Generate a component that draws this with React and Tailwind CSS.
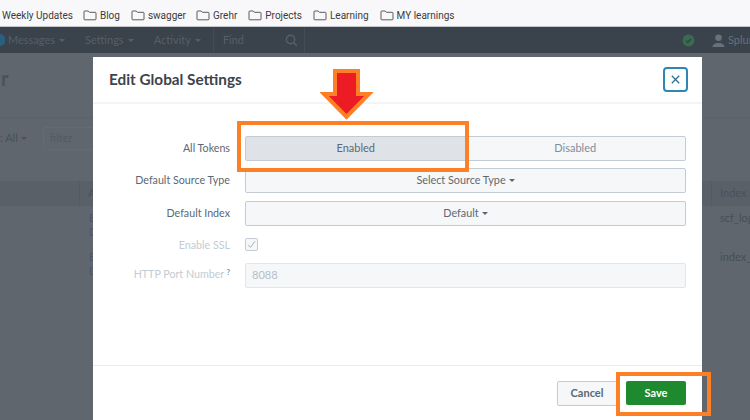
const FOLDER = "M2 3h3.2l1.2 1.3H12.2a.8.8 0 0 1 .8.8v5.9a.8.8 0 0 1-.8.8H1.8a.8.8 0 0 1-.8-.8V3.8a.8.8 0 0 1 .8-.8z";

function Bookmark({ label, className }) {
  return (
    <div className={`flex items-center gap-[3px] ${className || ""}`}>
      <svg width="14" height="14" viewBox="0 0 14 14" fill="none" stroke="#4a4a4a" strokeWidth="0.9">
        <path d={FOLDER} />
      </svg>
      <span>{label}</span>
    </div>
  );
}

function Caret({ className }) {
  return <span className={`inline-block w-0 h-0 border-x-[3px] border-x-transparent border-t-[3px] ${className}`} />;
}

function Row({ label, muted, flat, children, className }) {
  return (
    <div className={`flex items-center ${className}`}>
      <div className={`w-[137px] text-right text-[10.7px] leading-[13px] ${flat ? "" : "pb-[3px]"} ${muted ? "text-[#c3cbd4]" : "text-[#5c6773]"}`}>{label}</div>
      <div className="ml-[15px] flex-1">{children}</div>
    </div>
  );
}

function SelectBox({ children }) {
  return (
    <div className="h-[25px] flex items-center justify-center gap-[3px] rounded-[2px] border border-[#c3cbd4] bg-[#f5f7f9] text-[10.8px] text-[#5f6770]">
      {children}
      <Caret className="border-t-[#5c6773]" />
    </div>
  );
}

export default function App() {
  return (
    <div className="relative w-[750px] h-[420px] overflow-hidden flex flex-col bg-[#5f666e] font-['Lato','Liberation_Sans',sans-serif]">
      {/* browser bookmarks */}
      <div className="h-[27px] shrink-0 flex items-center bg-[#f8f8fa] border-b border-[#c4c5c7] pl-[2px] pt-[4px] text-[10px] text-[#3b3b3b] font-['Roboto','Liberation_Sans',sans-serif]">
        <span>Weekly Updates</span>
        <Bookmark label="Blog" className="ml-[10px]" />
        <Bookmark label="swagger" className="ml-[11px]" />
        <Bookmark label="Grehr" className="ml-[10px]" />
        <Bookmark label="Projects" className="ml-[11px]" />
        <Bookmark label="Learning" className="ml-[11px]" />
        <Bookmark label="MY learnings" className="ml-[11px]" />
      </div>

      {/* dimmed app nav */}
      <div className="h-[26px] shrink-0 flex items-center bg-[#3a424b] text-[11px] text-[#565f69]">
        <div className="w-[5px] h-[12px] rounded-r-full bg-[#2a5f80]" />
        <div className="ml-[3px] flex items-center gap-[4px]">Messages <Caret className="border-t-[#565f69]" /></div>
        <div className="ml-[20px] flex items-center gap-[4px]">Settings <Caret className="border-t-[#565f69]" /></div>
        <div className="ml-[20px] flex items-center gap-[4px]">Activity <Caret className="border-t-[#565f69]" /></div>
        <div className="ml-[12px] h-full w-[92px] flex items-center justify-between border-x border-[#444c55] pl-[9px] pr-[6px]">
          <span>Find</span>
          <svg width="13" height="13" viewBox="0 0 13 13" fill="none" stroke="#565f69" strokeWidth="1.4">
            <circle cx="5.5" cy="5.5" r="4.2" />
            <path d="M8.6 8.6 12 12" />
          </svg>
        </div>
        <div className="ml-auto flex items-center">
          <svg width="13" height="13" viewBox="0 0 13 13">
            <circle cx="6.5" cy="6.5" r="6" fill="#3b6a50" />
            <path d="M4 6.7 5.8 8.4 9 5" fill="none" stroke="#2c4436" strokeWidth="1.1" />
          </svg>
          <svg className="ml-[17px]" width="13" height="13" viewBox="0 0 13 13" fill="#68717b">
            <circle cx="6.5" cy="3.8" r="3.3" />
            <path d="M0.5 13c0-2.6 2.8-3.4 4.4-4h3.2c1.6.6 4.4 1.4 4.4 4z" />
          </svg>
          <span className="ml-[3px] w-[22px] overflow-hidden whitespace-nowrap text-[#68717b]">Splunk</span>
        </div>
      </div>

      {/* dimmed page beneath the dialog */}
      <div className="relative flex-1 text-[#49515a]">
        <div className="h-[65px] border-b border-[#5a6169] text-[20px] font-bold leading-none pt-[15px] pl-[1px]">
          <span className="text-[#4a525b]">r</span>
        </div>
        <div className="mt-[8px] h-[24px] flex items-center text-[11px]">
          <span className="flex items-center gap-[3px]">: All <Caret className="border-t-[#49515a]" /></span>
          <div className="ml-[16px] h-[23px] w-[60px] flex items-center rounded-[2px] border border-[#646b73] pl-[6px] text-[#525a63]">filter</div>
        </div>
        <div className="mt-[31px] h-[25px] flex items-center bg-[#596068] text-[11px]">
          <div className="w-[80px] h-full border-r border-[#545b63]" />
          <div className="flex-1 pl-[8px]">A</div>
          <div className="w-[39px] h-full border-l border-[#545b63] pl-[8px] flex items-center">Index</div>
        </div>
        <div className="flex text-[11px] leading-[14px] pt-[5px]">
          <div className="ml-[89px] text-[#47586a]">
            <div>E</div><div>D</div>
            <div className="mt-[11px]">E</div><div>D</div>
          </div>
          <div className="ml-auto w-[30px] overflow-hidden whitespace-nowrap text-[#474e57]">
            <div>scf_log</div>
            <div className="mt-[25px]">index_</div>
          </div>
        </div>
      </div>

      {/* dialog */}
      <div className="absolute left-[93px] top-[57px] w-[609px] h-[380px] bg-white flex flex-col">
        <div className="h-[47px] shrink-0 flex items-center justify-between border-b-2 border-[#f2f4f5] pl-[16px] pr-[14px]">
          <span className="text-[15.3px] font-bold text-[#3c444d]">Edit Global Settings</span>
          <button className="w-[25px] h-[25px] flex items-center justify-center rounded-[4px] border-2 border-[#2f86b5]">
            <svg width="9" height="9" viewBox="0 0 9 9" stroke="#2a6f9c" strokeWidth="1.3">
              <path d="M.8.8l7.4 7.4M8.2.8.8 8.2" />
            </svg>
          </button>
        </div>
        <div className="pt-[32px] pr-[16px] pl-0">
          <Row label="All Tokens" className="h-[25px]">
            <div className="flex h-[25px] rounded-[2px] border border-[#c3cbd4] text-[11px]">
              <div className="flex-1 flex items-center justify-center bg-[#dfe3e7] text-[#5f6770]">Enabled</div>
              <div className="flex-1 flex items-center justify-center bg-[#f5f7f9] text-[#818d99]">Disabled</div>
            </div>
          </Row>
          <Row label="Default Source Type" className="mt-[7px]">
            <SelectBox>Select Source Type</SelectBox>
          </Row>
          <Row label="Default Index" className="mt-[8px]">
            <SelectBox>Default</SelectBox>
          </Row>
          <Row label="Enable SSL" muted flat className="mt-[12px]">
            <div className="w-[13px] h-[13px] flex items-center justify-center rounded-[2px] border border-[#c3cbd4] bg-[#f5f7f9]">
              <svg width="9" height="9" viewBox="0 0 9 9" fill="none" stroke="#a9b3bd" strokeWidth="1">
                <path d="M1 4.8 3.4 7.4 8 1.2" />
              </svg>
            </div>
          </Row>
          <Row
            muted
            className="mt-[12px]"
            label={<span>HTTP Port Number <span className="relative -top-[3px] text-[7px] font-bold text-[#5c94b8]">?</span></span>}
          >
            <div className="h-[25px] flex items-center rounded-[2px] border border-[#e1e6eb] bg-[#f5f7f9] pl-[6px] text-[11px] text-[#b6bfc8]">8088</div>
          </Row>
        </div>
        <div className="mt-auto h-[72px] shrink-0 border-t border-[#e7eaee] flex gap-[9px] pl-[464px] pt-[15px]">
          <button className="w-[60px] h-[25px] rounded-[2px] border border-[#c3cbd4] bg-[#f5f7f9] text-[11px] font-bold text-[#5c6773]">Cancel</button>
          <button className="w-[60px] h-[24px] rounded-[2px] bg-[#1e8a2f] text-[11px] font-bold text-white">Save</button>
        </div>
      </div>

      {/* annotations */}
      <div className="absolute left-[237px] top-[121px] w-[232px] h-[51px] border-4 border-[#fd7f26]" />
      <div className="absolute left-[616px] top-[372px] w-[95px] h-[44px] border-4 border-[#fd7f26]" />
      <svg className="absolute left-[320px] top-[67px]" width="54" height="55" viewBox="0 0 54 55">
        <path d="M15 4H38V27H49L26.5 50 4 27H15Z" fill="#ed1c24" stroke="#fd7f26" strokeWidth="4" />
      </svg>
    </div>
  );
}
